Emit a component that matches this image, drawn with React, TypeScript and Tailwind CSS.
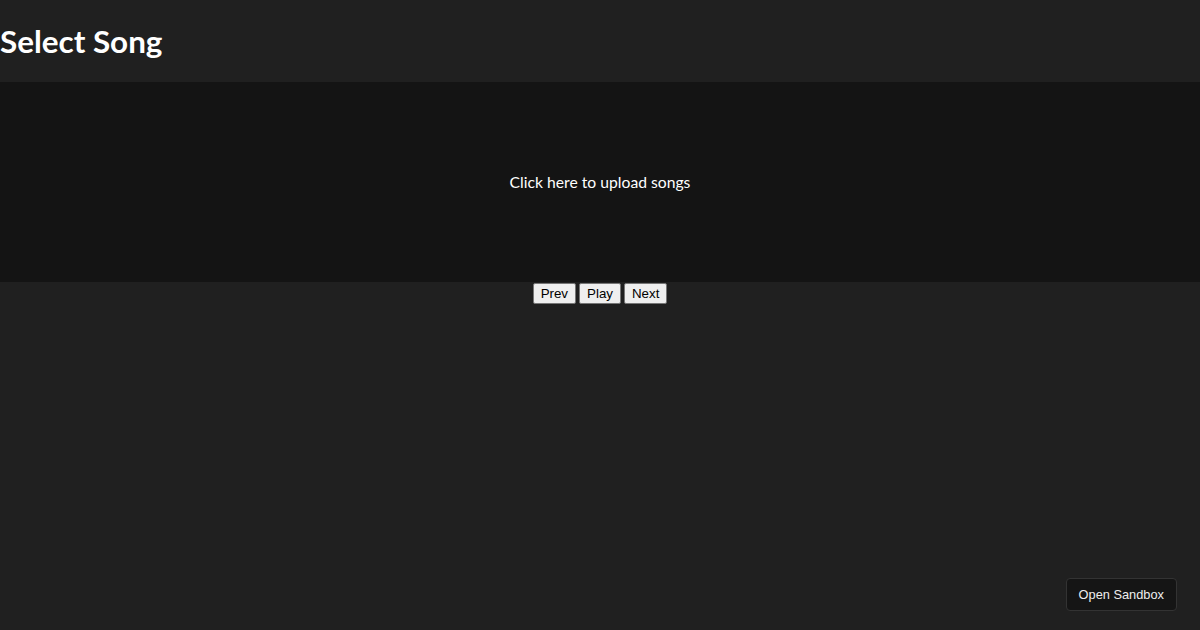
export default function App() {
  const controls = ['Prev', 'Play', 'Next']

  return (
    <div className="relative min-h-[630px] bg-[#202020] text-white [font-family:Lato,'Noto_Sans',sans-serif]">
      <header className="flex h-[82px] items-center pt-[2px]">
        <h1 className="text-[31.4px] font-bold leading-[1.2]">Select Song</h1>
      </header>

      <div className="flex h-[200px] cursor-pointer items-center justify-center bg-[#141414] pt-[2px] text-[15.7px]">
        Click here to upload songs
      </div>

      <div className="mt-px flex justify-center gap-[3px]">
        {controls.map((c) => (
          <button
            key={c}
            className="rounded-[2px] border border-[#767676] bg-[#efefef] px-[7px] py-[1px] text-[13.33px] leading-[17px] text-black [font-family:'Liberation_Sans',Arial,sans-serif]"
          >
            {c}
          </button>
        ))}
      </div>

      <button className="absolute bottom-[19px] right-[23px] h-[33px] rounded-[4px] border border-[#333] bg-[#151515] px-[12px] text-[12.8px] text-[#eee] [font-family:'Liberation_Sans',Arial,sans-serif]">
        Open Sandbox
      </button>
    </div>
  )
}
